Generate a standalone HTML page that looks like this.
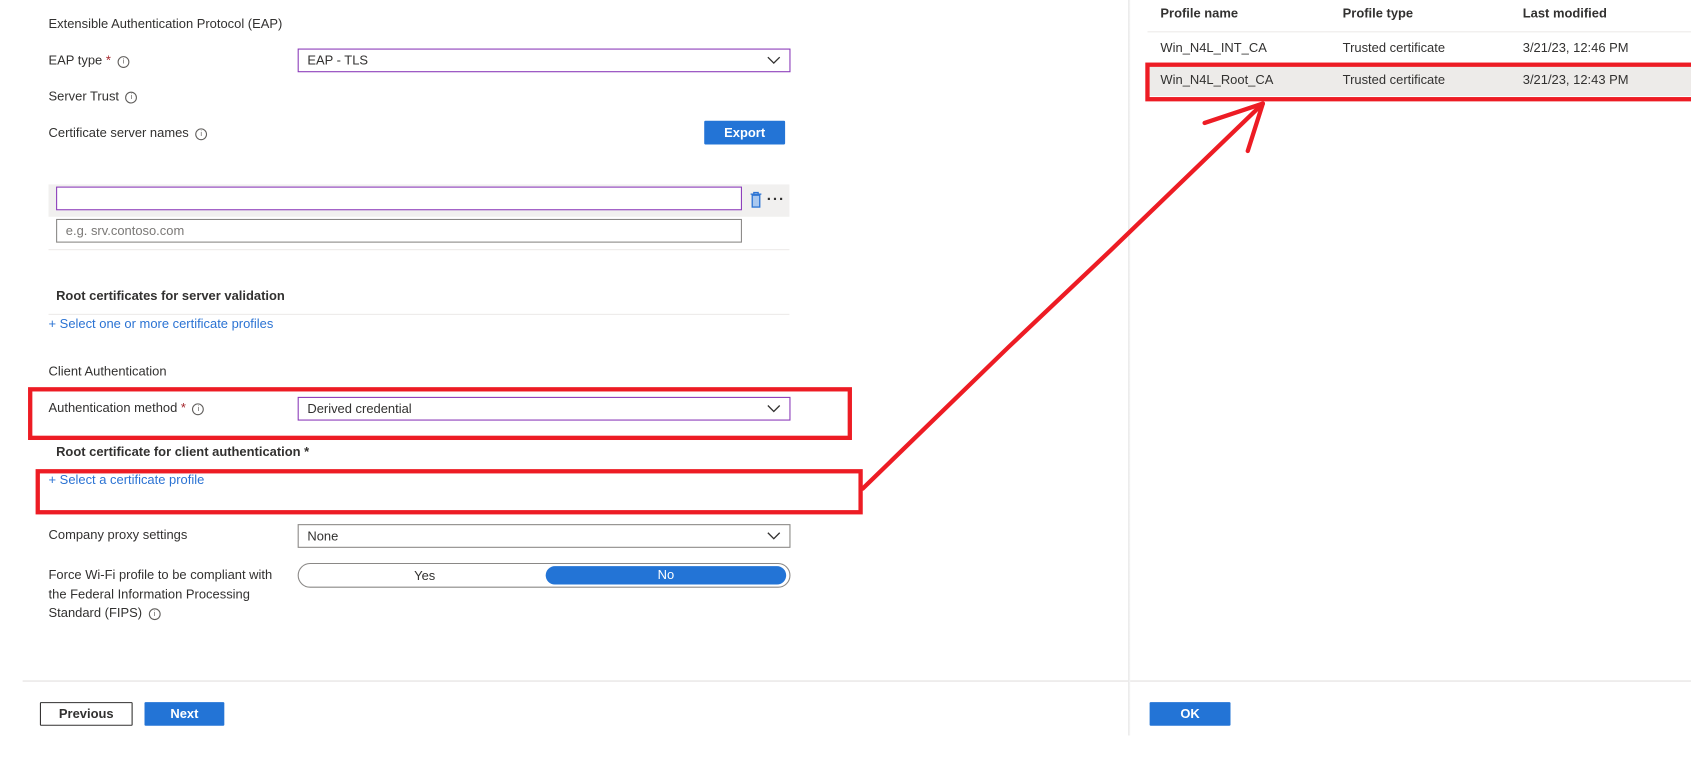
<!DOCTYPE html>
<html><head><meta charset="utf-8"><style>
html,body{margin:0;padding:0;background:#fff;width:1691px;height:764px;overflow:hidden}
#w{position:absolute;left:0;top:0;width:1568px;height:709px;transform:scale(1.07844);transform-origin:0 0;font-family:"Liberation Sans",sans-serif;font-size:12px;color:#323130}
.a{position:absolute;white-space:nowrap}
.t{position:absolute;white-space:nowrap;line-height:14px}
.box{position:absolute;box-sizing:border-box;background:#fff}
.pur{border:1px solid #8a3ab9}
.gry{border:1px solid #8a8886}
.chev{position:absolute;right:8px;top:4px}
.req{color:#a4262c}
.info{display:inline-block;width:9px;height:9px;border:1px solid #605e5c;border-radius:50%;font-size:7px;line-height:9px;text-align:center;margin-left:6px;vertical-align:1px;color:#605e5c}
.btn{position:absolute;box-sizing:border-box;height:22px;line-height:22px;text-align:center;font-weight:bold;font-size:12px;background:#2374d6;color:#fff;border-radius:1px}
.b{font-weight:bold}
.lnk{color:#2b73d3}
.red{position:absolute;box-sizing:border-box;border:4px solid #ed1c24}
</style></head><body><div id="w">
<div class="t" style="left:45px;top:15px">Extensible Authentication Protocol (EAP)</div>
<div class="t" style="left:45px;top:49px">EAP type <span class="req">*</span><span class="info">i</span></div>
<div class="box pur" style="left:276px;top:45px;width:457px;height:22px"><span class="t" style="left:8px;top:3px">EAP - TLS</span><svg class="chev" width="13" height="12" viewBox="0 0 13 12"><path d="M1 3l5.5 5.5L12 3" fill="none" stroke="#323130" stroke-width="1.2"/></svg></div>
<div class="t" style="left:45px;top:82px">Server Trust<span class="info">i</span></div>
<div class="t" style="left:45px;top:116px">Certificate server names<span class="info">i</span></div>
<div class="btn" style="left:653px;top:112px;width:75px">Export</div>
<div class="a" style="left:45px;top:171px;width:687px;height:30px;background:#f1f0ef"></div>
<div class="box pur" style="left:52px;top:173px;width:636px;height:22px"></div>
<svg class="a" style="left:695px;top:177px" width="12" height="16" viewBox="0 0 12 16"><path d="M1 3h10M4 3V1.5h4V3" fill="none" stroke="#2b73d3" stroke-width="1.2"/><rect x="2.5" y="4" width="7" height="11" fill="#a9c8ef" stroke="#2b73d3" stroke-width="1.2"/></svg>
<div class="a" style="left:711px;top:179px;font-size:14px;line-height:10px;letter-spacing:1px;font-weight:bold">···</div>
<div class="box gry" style="left:52px;top:203px;width:636px;height:22px"><span class="t" style="left:8px;top:3px;color:#7a7876">e.g. srv.contoso.com</span></div>
<div class="a" style="left:45px;top:231px;width:687px;height:1px;background:#edebe9"></div>
<div class="t b" style="left:52px;top:267px">Root certificates for server validation</div>
<div class="a" style="left:45px;top:291px;width:687px;height:1px;background:#edebe9"></div>
<div class="t lnk" style="left:45px;top:293px">+ Select one or more certificate profiles</div>
<div class="t" style="left:45px;top:337px">Client Authentication</div>
<div class="t" style="left:45px;top:371px">Authentication method <span class="req">*</span><span class="info">i</span></div>
<div class="box pur" style="left:276px;top:368px;width:457px;height:22px"><span class="t" style="left:8px;top:3px">Derived credential</span><svg class="chev" width="13" height="12" viewBox="0 0 13 12"><path d="M1 3l5.5 5.5L12 3" fill="none" stroke="#323130" stroke-width="1.2"/></svg></div>
<div class="red" style="left:26px;top:359px;width:764px;height:49px"></div>
<div class="t b" style="left:52px;top:412px">Root certificate for client authentication <span>*</span></div>
<div class="t lnk" style="left:45px;top:438px">+ Select a certificate profile</div>
<div class="red" style="left:33px;top:435px;width:767px;height:42px"></div>
<div class="t" style="left:45px;top:489px">Company proxy settings</div>
<div class="box gry" style="left:276px;top:486px;width:457px;height:22px"><span class="t" style="left:8px;top:3px">None</span><svg class="chev" width="13" height="12" viewBox="0 0 13 12"><path d="M1 3l5.5 5.5L12 3" fill="none" stroke="#323130" stroke-width="1.2"/></svg></div>
<div class="t" style="left:45px;top:525px;line-height:17.5px">Force Wi-Fi profile to be compliant with<br>the Federal Information Processing<br>Standard (FIPS)<span class="info">i</span></div>
<div class="box gry" style="left:276px;top:522px;width:457px;height:23px;border-radius:12px"><span class="t" style="left:107px;top:4px">Yes</span><div class="a" style="left:229px;top:2px;width:223px;height:17px;background:#2374d6;border-radius:9px;color:#fff;text-align:center;line-height:17px">No</div></div>
<div class="a" style="left:21px;top:631px;width:1547px;height:1px;background:#e1dfdd"></div>
<div class="btn" style="left:37px;top:651px;width:86px;background:#fff;color:#323130;border:1px solid #323130;line-height:20px">Previous</div>
<div class="btn" style="left:134px;top:651px;width:74px">Next</div>
<div class="a" style="left:1046px;top:0;width:2px;height:682px;background:linear-gradient(90deg,#e8e8e8,#f6f6f6)"></div>
<div class="t b" style="left:1076px;top:5px">Profile name</div>
<div class="t b" style="left:1245px;top:5px">Profile type</div>
<div class="t b" style="left:1412px;top:5px">Last modified</div>
<div class="a" style="left:1064px;top:29px;width:504px;height:1px;background:#edebe9"></div>
<div class="t" style="left:1076px;top:37px">Win_N4L_INT_CA</div>
<div class="t" style="left:1245px;top:37px">Trusted certificate</div>
<div class="t" style="left:1412px;top:37px">3/21/23, 12:46 PM</div>
<div class="a" style="left:1064px;top:61px;width:504px;height:28px;background:#edebe9"></div>
<div class="t" style="left:1076px;top:67px">Win_N4L_Root_CA</div>
<div class="t" style="left:1245px;top:67px">Trusted certificate</div>
<div class="t" style="left:1412px;top:67px">3/21/23, 12:43 PM</div>
<div class="red" style="left:1062px;top:58px;width:510px;height:36px"></div>
<div class="btn" style="left:1066px;top:651px;width:75px">OK</div>
<svg class="a" style="left:0;top:0" width="1568" height="709"><g fill="none" stroke="#ed1c24" stroke-width="4" stroke-linecap="round" stroke-linejoin="round"><path d="M800 453L935 322L1030 232L1171 96"/><path d="M1117 114L1171 96L1157 140"/></g></svg>
</div></body></html>
